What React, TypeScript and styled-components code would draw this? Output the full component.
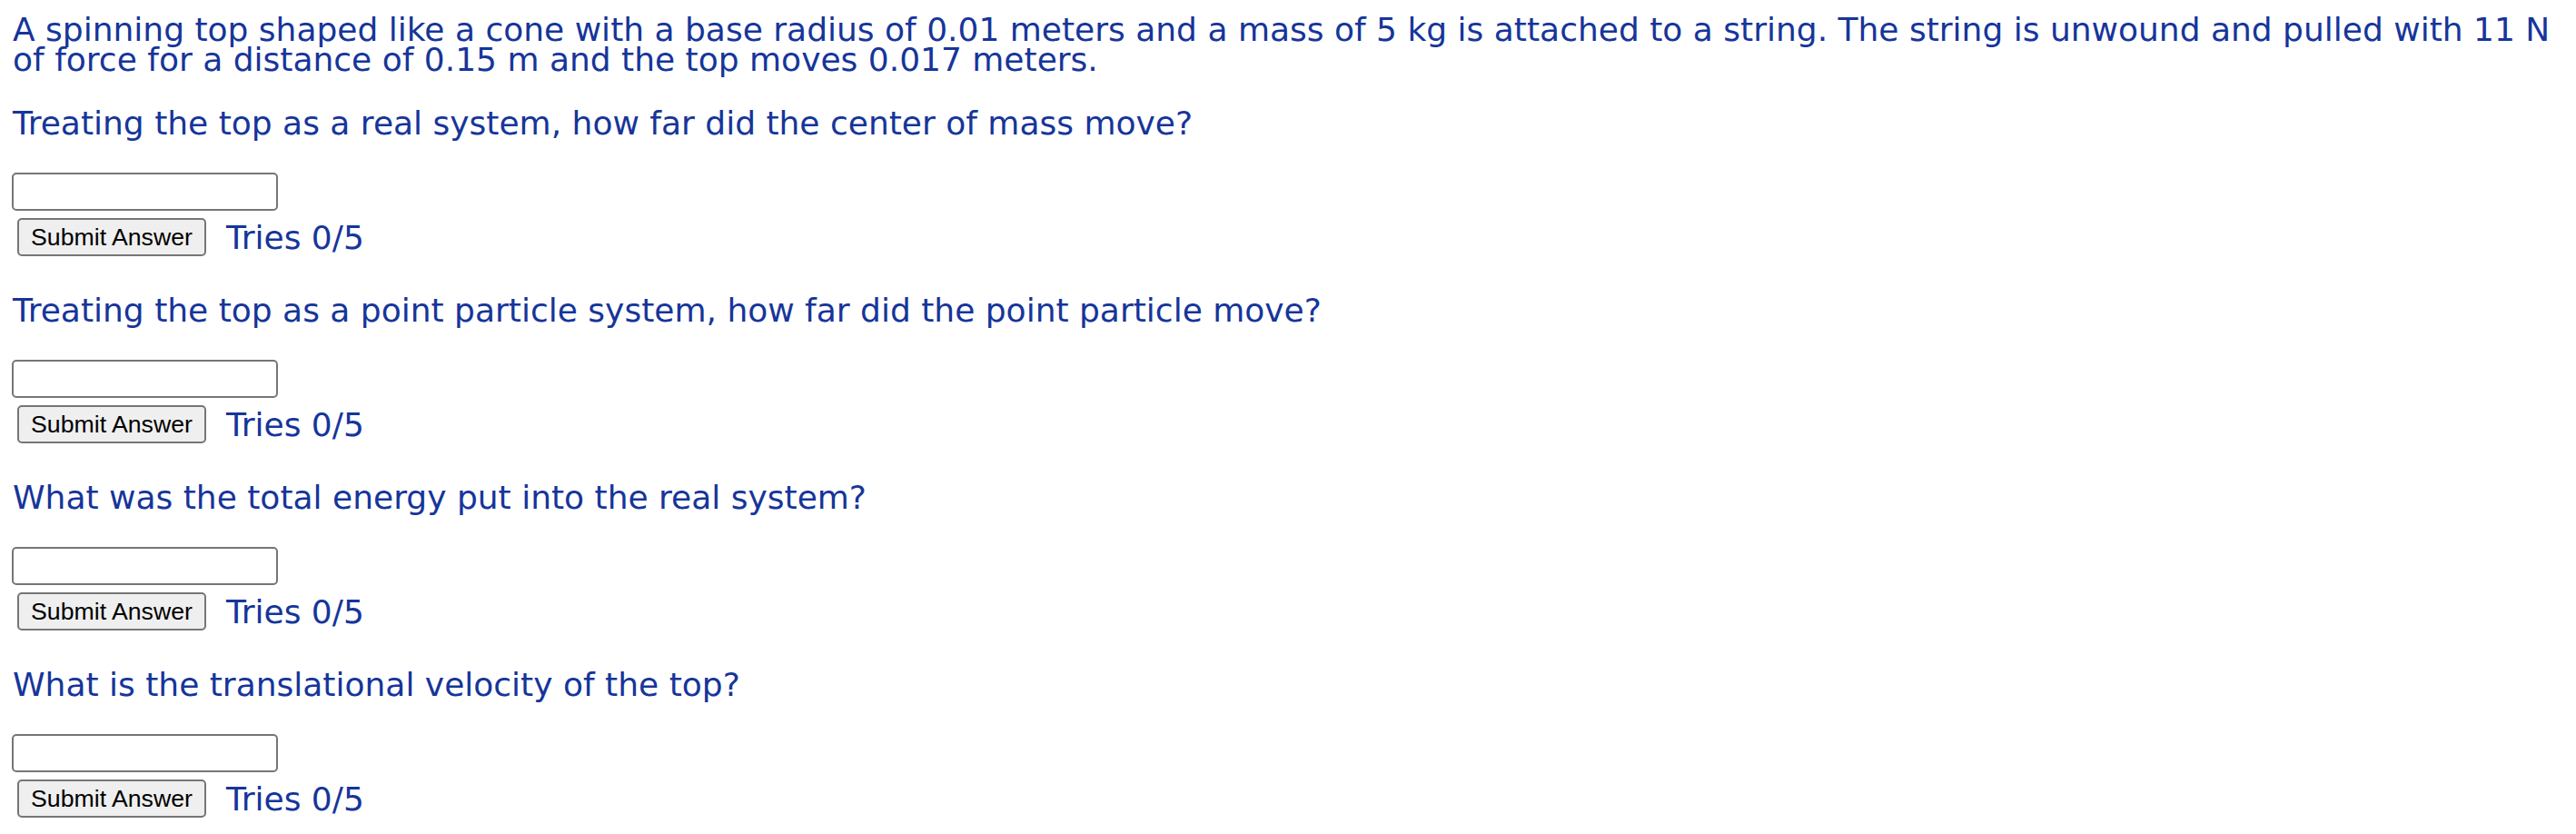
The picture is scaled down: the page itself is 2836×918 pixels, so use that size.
import styled, { createGlobalStyle } from 'styled-components';

const questions = [
  'Treating the top as a real system, how far did the center of mass move?',
  'Treating the top as a point particle system, how far did the point particle move?',
  'What was the total energy put into the real system?',
  'What is the translational velocity of the top?',
];

const GlobalStyle = createGlobalStyle`
  html, body {
    margin: 0;
    background: #ffffff;
  }
  body {
    font-family: "DejaVu Sans", Verdana, sans-serif;
    color: #16359a;
  }
`;

const Page = styled.div`
  display: flex;
  flex-direction: column;
  padding: 16px 4px 0 14px;
`;

const ProblemText = styled.p`
  margin: 0;
  font-size: 36px;
  line-height: 33px;
`;

const QuestionList = styled.div`
  display: flex;
  flex-direction: column;
  gap: 43px;
  margin-top: 37px;
`;

const Block = styled.div`
  display: flex;
  flex-direction: column;
  align-items: flex-start;
`;

const Question = styled.div`
  font-size: 36px;
  line-height: 33px;
`;

const AnswerInput = styled.input`
  box-sizing: border-box;
  width: 293px;
  height: 42px;
  margin: 38px 0 0 -1px;
  border: 2px solid #767676;
  border-radius: 5px;
  background: #ffffff;
  padding: 0 6px;
  font-size: 26px;
`;

const SubmitRow = styled.div`
  display: flex;
  align-items: center;
  gap: 22px;
  margin-top: 8px;
`;

const SubmitButton = styled.button`
  box-sizing: border-box;
  width: 208px;
  height: 42px;
  margin-left: 5px;
  border: 2px solid #767676;
  border-radius: 5px;
  background: #efefef;
  color: #000000;
  font-family: "Liberation Sans", Arial, sans-serif;
  font-size: 26.67px;
  padding: 0;
  cursor: pointer;
`;

const Tries = styled.span`
  font-size: 36px;
  line-height: 33px;
`;

function QuestionBlock({ text }: { text: string }) {
  return (
    <Block>
      <Question>{text}</Question>
      <AnswerInput type="text" />
      <SubmitRow>
        <SubmitButton type="button">Submit Answer</SubmitButton>
        <Tries>Tries 0/5</Tries>
      </SubmitRow>
    </Block>
  );
}

export default function App() {
  return (
    <>
      <GlobalStyle />
      <Page>
        <ProblemText>
          A spinning top shaped like a cone with a base radius of 0.01 meters and a mass of 5 kg is
          attached to a string. The string is unwound and pulled with 11 N of force for a distance
          of 0.15 m and the top moves 0.017 meters.
        </ProblemText>
        <QuestionList>
          {questions.map((q, i) => (
            <QuestionBlock key={i} text={q} />
          ))}
        </QuestionList>
      </Page>
    </>
  );
}
